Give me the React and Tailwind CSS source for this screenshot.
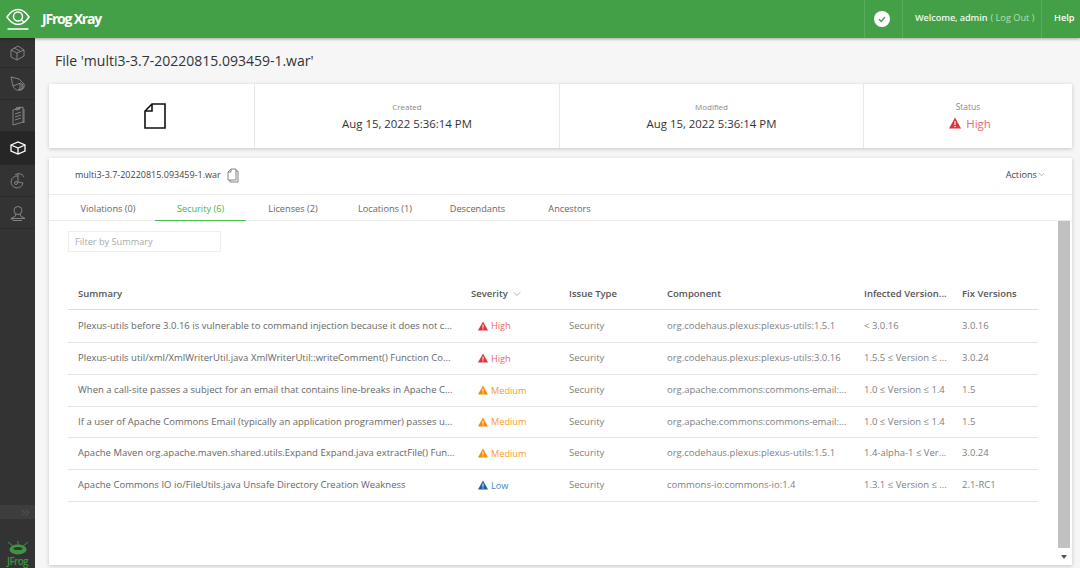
import { ChevronDown, ChevronsRight } from 'lucide-react';

const rows = [
  { summary: 'Plexus-utils before 3.0.16 is vulnerable to command injection because it does not c...', severity: 'High', component: 'org.codehaus.plexus:plexus-utils:1.5.1', infected: '< 3.0.16', fix: '3.0.16', height: 'h-[33px]' },
  { summary: 'Plexus-utils util/xml/XmlWriterUtil.java XmlWriterUtil::writeComment() Function Co...', severity: 'High', component: 'org.codehaus.plexus:plexus-utils:3.0.16', infected: '1.5.5 ≤ Version ≤ ...', fix: '3.0.24', height: 'h-[32px]' },
  { summary: 'When a call-site passes a subject for an email that contains line-breaks in Apache C...', severity: 'Medium', component: 'org.apache.commons:commons-email:...', infected: '1.0 ≤ Version ≤ 1.4', fix: '1.5', height: 'h-[32px]' },
  { summary: 'If a user of Apache Commons Email (typically an application programmer) passes u...', severity: 'Medium', component: 'org.apache.commons:commons-email:...', infected: '1.0 ≤ Version ≤ 1.4', fix: '1.5', height: 'h-[31px]' },
  { summary: 'Apache Maven org.apache.maven.shared.utils.Expand Expand.java extractFile() Fun...', severity: 'Medium', component: 'org.codehaus.plexus:plexus-utils:1.5.1', infected: '1.4-alpha-1 ≤ Ver...', fix: '3.0.24', height: 'h-[32px]' },
  { summary: 'Apache Commons IO io/FileUtils.java Unsafe Directory Creation Weakness', severity: 'Low', component: 'commons-io:commons-io:1.4', infected: '1.3.1 ≤ Version ≤ ...', fix: '2.1-RC1', height: 'h-[32px]' },
];

const tabs = [
  { name: 'Violations (0)', width: 'w-[106px] pl-[12px]' },
  { name: 'Security (6)', width: 'w-[91px]', active: true },
  { name: 'Licenses (2)', width: 'w-[94px]' },
  { name: 'Locations (1)', width: 'w-[90px]' },
  { name: 'Descendants', width: 'w-[95px]' },
  { name: 'Ancestors', width: 'w-[89px]' },
];

const Severity = ({ level, large }) => {
  const color = level === 'High' ? 'text-[#e8686f]' : level === 'Medium' ? 'text-[#f8992c]' : 'text-[#3f85c6]';
  const fill = level === 'High' ? '#d9363e' : level === 'Medium' ? '#f58a07' : '#1f5f9f';
  const size = large ? 12 : 10;
  return (
    <span className={`flex items-center ${large ? 'gap-[5px] text-[11.5px]' : 'gap-[3px] text-[9.2px]'} ${color}`}>
      <svg width={size} height={size} viewBox="0 0 20 20">
        <path d="M10 1 L20 19 H0 Z" fill={fill} />
        <rect x="9" y="7" width="2" height="6.5" fill="#fff" />
        <rect x="9" y="15" width="2" height="2" fill="#fff" />
      </svg>
      {level}
    </span>
  );
};

const SideIcon = ({ children, active, height, w = 18, h = 18 }) => (
  <div className={`${height} flex items-center justify-center border-b border-[#2b2b2b] ${active ? 'bg-[#262626] text-white' : 'text-[#8c8c8c]'}`}>
    <svg width={w} height={h} viewBox={`0 0 ${w} ${h}`} fill="none" stroke="currentColor" strokeWidth="0.9">
      {children}
    </svg>
  </div>
);

export default function App() {
  return (
    <div className="w-[1080px] h-[568px] overflow-hidden flex flex-col bg-[#f6f6f6] font-['Open_Sans',sans-serif]">
      <header className="h-[38px] shrink-0 bg-[#43a047] flex items-center text-white shadow-[0_1px_3px_rgba(0,0,0,0.35)] z-10">
        <div className="w-[35px] flex justify-center">
          <svg width="24" height="28" viewBox="0 0 24 28" fill="none" stroke="#fff">
            <path d="M1 12 C5 6 9 4.5 12 4.5 C15 4.5 19 6 23 12 C19 18 15 19.5 12 19.5 C9 19.5 5 18 1 12 Z" strokeWidth="1.5" />
            <circle cx="12" cy="11.5" r="4.5" strokeWidth="1.5" />
            <path d="M15.5 15 L18 17" strokeWidth="1.3" />
            <path d="M1.5 24 H22.5" strokeWidth="1.5" />
          </svg>
        </div>
        <span className="ml-[7px] pb-[2px] text-[14px] font-bold tracking-[-1.2px]">JFrog Xray</span>
        <div className="ml-auto flex h-full items-center text-[9.2px] whitespace-nowrap">
          <div className="w-[38px] h-full pr-[3px] flex items-center justify-center border-l border-[#5aad5e]">
            <svg width="16" height="16" viewBox="0 0 16 16">
              <circle cx="8" cy="8" r="8" fill="#fff" />
              <path d="M5 8.2 L7.2 10.4 L11 6" fill="none" stroke="#43a047" strokeWidth="1.4" />
            </svg>
          </div>
          <div className="w-[139px] h-full pb-[2px] flex items-center pl-[12px] border-l border-[#5aad5e]">
            <span className="font-semibold text-[#eef7ee] tracking-[-0.1px]">Welcome, admin</span>
            <span className="ml-[3px] text-[#b9dfbb]">( Log Out )</span>
          </div>
          <div className="w-[39px] h-full pb-[2px] flex items-center pl-[12px] border-l border-[#5aad5e] font-semibold">Help</div>
        </div>
      </header>

      <div className="flex-1 flex min-h-0">
        <aside className="w-[35px] shrink-0 bg-[#333] flex flex-col">
          <SideIcon height="h-[30px]">
            <path d="M2 6 L9 2 L15 6 V12 L8 16 L2 13 Z M2 6 L8 9 L15 6 M8 9 V16 M5 4 L11 7" />
          </SideIcon>
          <SideIcon height="h-[32px]">
            <path d="M2 2 L10 4 L15 9 C16 12 14 15 11 15 C8 16 5 14 4 11 Z M9 9 A3.2 3.2 0 1 1 9 14 M11 8 V15 M13 9 V14 M4 11 L9 9" />
          </SideIcon>
          <SideIcon height="h-[32px]" w={14} h={22}>
            <path d="M2 5 L12 2 V17 L2 20 Z M5 3 L9 2 V4 L5 5 Z M4 9 L10 7 M4 12 L10 10 M4 15 L10 13 M12 17 L13 18 V4" />
          </SideIcon>
          <SideIcon height="h-[33px]" active>
            <path d="M2 6 L9 3 L16 6 V12 L9 15 L2 12 Z M2 6 L9 9 L16 6 M9 9 V15" strokeWidth="1.3" />
          </SideIcon>
          <SideIcon height="h-[32px]">
            <path d="M9 4 A6 6 0 1 0 14 11 L9 10 Z M6 3 C8 1 13 1 15 5 M9 4 L9 1.5" />
            <circle cx="7" cy="11" r="1.5" />
          </SideIcon>
          <SideIcon height="h-[32px]">
            <circle cx="9" cy="6.5" r="4" />
            <path d="M7 10 L6.5 12 L2 14.5 H16 L11.5 12 L11 10 M2 14.5 L4 16.5 H13" />
          </SideIcon>
          <div className="mt-auto h-[14px] bg-[#3d3d3d] flex items-center justify-end pr-[3px] text-[#666]">
            <ChevronsRight size={13} strokeWidth={1.2} />
          </div>
          <div className="h-[49px] flex flex-col items-center justify-end pb-[2px] text-[#3a963f]">
            <svg width="24" height="15" viewBox="0 0 24 15">
              <path d="M2 1 L8 6 M22 1 L16 6 M12 0 V4" stroke="currentColor" strokeWidth="1" />
              <ellipse cx="12" cy="8.5" rx="8.5" ry="5" fill="currentColor" />
              <ellipse cx="12" cy="7.5" rx="4.5" ry="1.5" fill="#333" />
            </svg>
            <span className="text-[10px] leading-[10px] font-semibold tracking-[-0.7px]">JFrog</span>
          </div>
        </aside>

        <main className="flex-1 min-w-0 pl-[14px] pr-[8px] flex flex-col">
          <h1 className="h-[46px] pl-[6px] pb-[2px] flex items-center text-[14px] text-[#333] font-normal">
            File 'multi3-3.7-20220815.093459-1.war'
          </h1>

          <section className="h-[64px] shrink-0 bg-white flex shadow-[0_1px_4px_rgba(0,0,0,0.2)]">
            <div className="w-[205px] pl-[6px] flex items-center justify-center">
              <svg width="22" height="26" viewBox="0 0 22 26" fill="none" stroke="#111" strokeWidth="1.6">
                <path d="M8 1 H21 V25 H1 V8 Z M8 1 V8 H1" />
              </svg>
            </div>
            <div className="w-[305px] border-l border-[#e8e8e8] flex flex-col items-center justify-center">
              <span className="text-[8px] text-[#888] mt-[1px]">Created</span>
              <span className="text-[11.4px] text-[#333] mt-[2px]">Aug 15, 2022 5:36:14 PM</span>
            </div>
            <div className="w-[304px] border-l border-[#e8e8e8] flex flex-col items-center justify-center">
              <span className="text-[8px] text-[#888] mt-[1px]">Modified</span>
              <span className="text-[11.4px] text-[#333] mt-[2px]">Aug 15, 2022 5:36:14 PM</span>
            </div>
            <div className="flex-1 border-l border-[#e8e8e8] flex flex-col items-center justify-center">
              <span className="text-[8.5px] text-[#888] mt-[1px]">Status</span>
              <span className="mt-[1px] ml-[4px]"><Severity level="High" large /></span>
            </div>
          </section>

          <section className="mt-[10px] h-[407px] shrink-0 bg-white shadow-[0_1px_4px_rgba(0,0,0,0.2)] flex flex-col">
            <div className="h-[37px] shrink-0 pb-[2px] border-b border-[#ececec] flex items-center pl-[26px] pr-[26px]">
              <span className="text-[9px] text-[#444]">multi3-3.7-20220815.093459-1.war</span>
              <svg className="ml-[5px]" width="13" height="15" viewBox="0 0 13 15" fill="none" stroke="#777" strokeWidth="0.9">
                <path d="M5 1 H10 V12 H2 V4 Z M5 1 V4 H2 M10 3 H12 V14 H4 V12" />
              </svg>
              <span className="ml-auto flex items-center text-[9.2px] text-[#444]">
                Actions
                <ChevronDown size={9} strokeWidth={1} />
              </span>
            </div>

            <div className="h-[26px] shrink-0 border-b border-[#ececec] flex">
              {tabs.map((tab) => (
                <div
                  key={tab.name}
                  className={`${tab.width} h-[26px] pt-[2px] flex items-center justify-center text-[9.2px] ${tab.active ? 'text-[#43b649] border-b border-[#43c04a]' : 'text-[#666]'}`}
                >
                  {tab.name}
                </div>
              ))}
            </div>

            <div className="flex-1 min-h-0 flex">
              <div className="flex-1 min-w-0 pl-[19px] pr-[20px] pt-[10px]">
                <div className="w-[153px] h-[21px] border border-[#eee] flex items-center pl-[6px] pt-[1px] text-[9.2px] text-[#aaa]">
                  Filter by Summary
                </div>

                <div className="mt-[27px] h-[31px] flex items-center border-b border-[#dcdcdc] text-[9.5px] font-semibold text-[#555]">
                  <div className="w-[403px] pl-[10px]">Summary</div>
                  <div className="w-[98px] flex items-center">
                    Severity
                    <ChevronDown size={12} strokeWidth={0.9} className="ml-[3px]" />
                  </div>
                  <div className="w-[98px]">Issue Type</div>
                  <div className="w-[197px]">Component</div>
                  <div className="w-[98px]">Infected Version...</div>
                  <div>Fix Versions</div>
                </div>

                {rows.map((row) => (
                  <div key={row.summary} className={`${row.height} flex items-center border-b border-[#e4e4e4] text-[9.5px] text-[#808080]`}>
                    <div className="w-[403px] pl-[10px] whitespace-nowrap overflow-hidden text-[#666] tracking-[0.02px]">{row.summary}</div>
                    <div className="w-[98px] pl-[7px]"><Severity level={row.severity} /></div>
                    <div className="w-[98px]">Security</div>
                    <div className="w-[197px] whitespace-nowrap overflow-hidden">{row.component}</div>
                    <div className="w-[98px] whitespace-nowrap overflow-hidden">{row.infected}</div>
                    <div>{row.fix}</div>
                  </div>
                ))}
              </div>

              <div className="w-[12px] shrink-0 flex flex-col">
                <div className="flex-1 bg-[#c1c1c1]" />
                <div className="h-[17px] bg-white flex items-center justify-center">
                  <span className="w-0 h-0 border-x-[3px] border-x-transparent border-t-[4px] border-t-[#555]" />
                </div>
              </div>
              <div className="w-[2px] shrink-0" />
            </div>
          </section>
        </main>
      </div>
    </div>
  );
}
